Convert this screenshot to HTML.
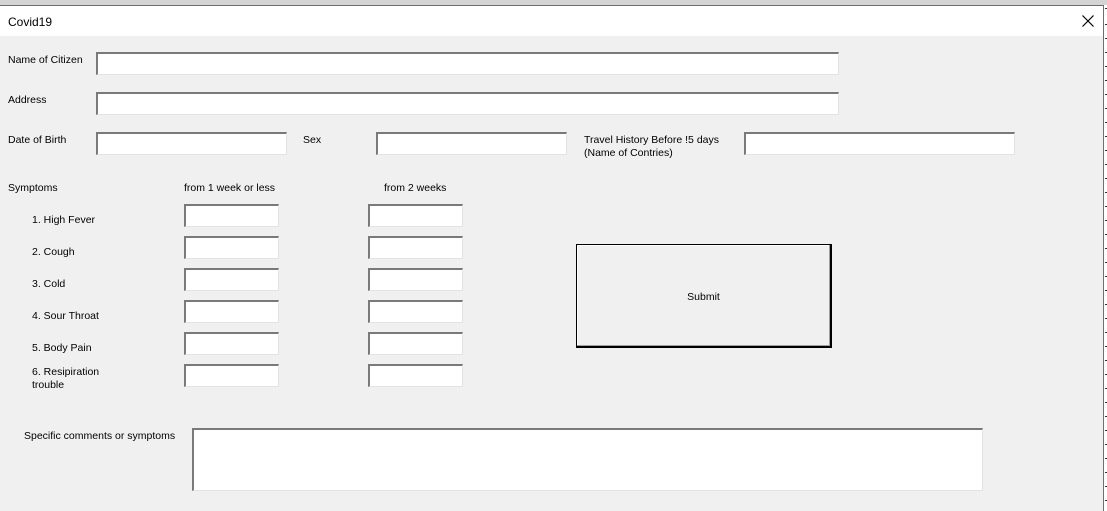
<!DOCTYPE html>
<html><head><meta charset="utf-8"><style>
*{margin:0;padding:0;box-sizing:border-box}
body{width:1107px;height:511px;overflow:hidden;background:#fff;position:relative;font-family:Tahoma,"Liberation Sans","DejaVu Sans",sans-serif;font-size:10.5px;color:#000}
.top{position:absolute;left:0;top:0;width:1107px;height:5px;background:#d4d4d4}
.win{position:absolute;left:0;top:5px;width:1104px;height:506px;background:#f0f0f0;border-top:1px solid #6e6e6e;border-right:1px solid #6e6e6e}
.title{position:absolute;left:0;top:0;width:1103px;height:30px;background:#fff}
.title span{position:absolute;left:8px;top:9px;font-size:12px}
.x{position:absolute;left:1081px;top:8px}
.strip{position:absolute;left:1105px;top:5px;width:2px;height:506px;background:repeating-linear-gradient(#fff 0 13px,#333 13px 14px);background-position:0 6px}
.in{position:absolute;background:#fff;border-top:2px solid #7a7a7a;border-left:2px solid #7a7a7a;border-right:1px solid #e3e3e3;border-bottom:1px solid #e3e3e3}
.l{position:absolute;white-space:nowrap;line-height:13px}
.btn{position:absolute;left:576px;top:244px;width:256px;height:104px;border:1px solid #000;border-right:2px solid #000;border-bottom:2px solid #000;box-shadow:inset -1px -1px 0 #a0a0a0, inset 1px 1px 0 #fff;display:flex;align-items:center;justify-content:center}
</style></head><body>
<div class="top"></div>
<div class="strip"></div>
<div class="win">
<div class="title"><span>Covid19</span>
<svg class="x" width="14" height="14" viewBox="0 0 14 14"><path d="M1.5 1.5L12.5 12.5M12.5 1.5L1.5 12.5" stroke="#000" stroke-width="1.2"/></svg></div>
</div>
<div class="l" style="left:8px;top:54px">Name of Citizen</div>
<div class="in" style="left:96px;top:52px;width:743px;height:23px"></div>
<div class="l" style="left:8px;top:94px">Address</div>
<div class="in" style="left:96px;top:92px;width:743px;height:23px"></div>
<div class="l" style="left:8px;top:134px">Date of Birth</div>
<div class="in" style="left:96px;top:132px;width:191px;height:23px"></div>
<div class="l" style="left:303px;top:134px">Sex</div>
<div class="in" style="left:376px;top:132px;width:191px;height:23px"></div>
<div class="l" style="left:584px;top:134px">Travel History Before !5 days<br>(Name of Contries)</div>
<div class="in" style="left:744px;top:132px;width:271px;height:23px"></div>
<div class="l" style="left:8px;top:182px">Symptoms</div>
<div class="l" style="left:184px;top:182px">from 1 week or less</div>
<div class="l" style="left:384px;top:182px">from 2 weeks</div>
<div class="l" style="left:32px;top:214px">1. High Fever</div>
<div class="l" style="left:32px;top:246px">2. Cough</div>
<div class="l" style="left:32px;top:278px">3. Cold</div>
<div class="l" style="left:32px;top:310px">4. Sour Throat</div>
<div class="l" style="left:32px;top:342px">5. Body Pain</div>
<div class="l" style="left:32px;top:366px">6. Resipiration<br>trouble</div>
<div class="in" style="left:184px;top:204px;width:95px;height:23px"></div>
<div class="in" style="left:368px;top:204px;width:95px;height:23px"></div>
<div class="in" style="left:184px;top:236px;width:95px;height:23px"></div>
<div class="in" style="left:368px;top:236px;width:95px;height:23px"></div>
<div class="in" style="left:184px;top:268px;width:95px;height:23px"></div>
<div class="in" style="left:368px;top:268px;width:95px;height:23px"></div>
<div class="in" style="left:184px;top:300px;width:95px;height:23px"></div>
<div class="in" style="left:368px;top:300px;width:95px;height:23px"></div>
<div class="in" style="left:184px;top:332px;width:95px;height:23px"></div>
<div class="in" style="left:368px;top:332px;width:95px;height:23px"></div>
<div class="in" style="left:184px;top:364px;width:95px;height:23px"></div>
<div class="in" style="left:368px;top:364px;width:95px;height:23px"></div>
<div class="btn"><span style="position:relative;top:1px">Submit</span></div>
<div class="l" style="left:24px;top:430px">Specific comments or symptoms</div>
<div class="in" style="left:192px;top:428px;width:791px;height:63px"></div>
</body></html>
